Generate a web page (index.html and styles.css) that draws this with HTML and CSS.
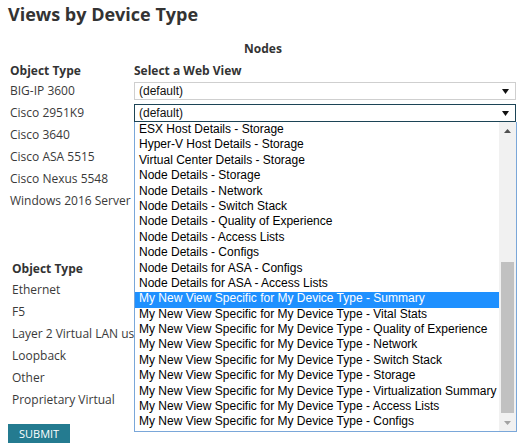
FILE: index.html
```html
<!DOCTYPE html>
<html>
<head>
<meta charset="utf-8">
<link rel="stylesheet" href="styles.css">
</head>
<body>
<h1 class="title">Views by Device Type</h1>

<section class="nodes">
  <div class="caption">Nodes</div>
  <div class="grid">
    <div class="hdr">Object Type</div>
    <div class="hdr">Select a Web View</div>

    <div class="lbl">BIG-IP 3600</div>
    <div class="cell"><div class="select"><span>(default)</span><svg class="arrow" width="7" height="5" viewBox="0 0 7 5"><polygon points="0,0 7,0 3.5,5" fill="#111"/></svg></div></div>

    <div class="lbl">Cisco 2951K9</div>
    <div class="cell">
      <div class="select open"><span>(default)</span><svg class="arrow" width="7" height="5" viewBox="0 0 7 5"><polygon points="0,0 7,0 3.5,5" fill="#111"/></svg></div>
      <div class="dropdown">
        <ul class="options">
          <li>ESX Host Details - Storage</li>
          <li>Hyper-V Host Details - Storage</li>
          <li>Virtual Center Details - Storage</li>
          <li>Node Details - Storage</li>
          <li>Node Details - Network</li>
          <li>Node Details - Switch Stack</li>
          <li>Node Details - Quality of Experience</li>
          <li>Node Details - Access Lists</li>
          <li>Node Details - Configs</li>
          <li>Node Details for ASA - Configs</li>
          <li>Node Details for ASA - Access Lists</li>
          <li class="selected">My New View Specific for My Device Type - Summary</li>
          <li>My New View Specific for My Device Type - Vital Stats</li>
          <li>My New View Specific for My Device Type - Quality of Experience</li>
          <li>My New View Specific for My Device Type - Network</li>
          <li>My New View Specific for My Device Type - Switch Stack</li>
          <li>My New View Specific for My Device Type - Storage</li>
          <li>My New View Specific for My Device Type - Virtualization Summary</li>
          <li>My New View Specific for My Device Type - Access Lists</li>
          <li>My New View Specific for My Device Type - Configs</li>
        </ul>
        <div class="scrollbar">
          <div class="sb-btn"><svg width="7" height="4" viewBox="0 0 7 4"><polygon points="0,4 7,4 3.5,0" fill="#505050"/></svg></div>
          <div class="sb-track"><div class="sb-thumb"></div></div>
          <div class="sb-btn"><svg width="7" height="4" viewBox="0 0 7 4"><polygon points="0,0 7,0 3.5,4" fill="#a3a3a3"/></svg></div>
        </div>
      </div>
    </div>

    <div class="lbl">Cisco 3640</div>
    <div class="cell"><div class="select"></div></div>

    <div class="lbl">Cisco ASA 5515</div>
    <div class="cell"><div class="select"></div></div>

    <div class="lbl">Cisco Nexus 5548</div>
    <div class="cell"><div class="select"></div></div>

    <div class="lbl">Windows 2016 Server</div>
    <div class="cell"><div class="select"></div></div>
  </div>
</section>

<section class="interfaces">
  <div class="grid2">
    <div class="hdr">Object Type</div>
    <div class="lbl">Ethernet</div>
    <div class="lbl">F5</div>
    <div class="lbl clip">Layer 2 Virtual LAN us</div>
    <div class="lbl">Loopback</div>
    <div class="lbl">Other</div>
    <div class="lbl">Proprietary Virtual</div>
  </div>
</section>

<button class="submit">SUBMIT</button>
</body>
</html>
```

FILE: styles.css
```css
html, body {
  margin: 0;
  padding: 0;
  background: #ffffff;
}

body {
  padding: 0 8px;
  font-family: "Open Sans", "Liberation Sans", sans-serif;
  font-size: 12px;
  color: #3a3a3a;
}

.title {
  margin: 2px 0 12px;
  font-size: 18px;
  line-height: 24px;
  font-weight: 700;
  color: #333333;
}

.nodes {
  width: 506px;
  margin-left: 2px;
}

.caption {
  text-align: center;
  font-weight: 700;
  line-height: 20px;
  padding-top: 1px;
  margin-bottom: 1px;
  color: #333333;
}

.grid {
  display: grid;
  grid-template-columns: 124px 382px;
  grid-template-rows: 20px repeat(6, 22px);
}

.hdr {
  font-weight: 700;
  line-height: 20px;
  padding-top: 1px;
  color: #333333;
  white-space: nowrap;
}

.lbl {
  line-height: 20px;
  padding-top: 1px;
  white-space: nowrap;
}

.clip {
  width: 122px;
  overflow: hidden;
}

.cell {
  position: relative;
  padding-top: 2px;
}

.select {
  box-sizing: border-box;
  height: 18px;
  border: 1px solid #cfcfcf;
  display: flex;
  align-items: center;
  justify-content: space-between;
  padding: 0 6px 0 4px;
  font-family: "Liberation Sans", Arial, sans-serif;
  font-size: 12px;
  line-height: 16px;
  color: #111111;
  background: #ffffff;
}

.select.open {
  border-color: #1c4456;
}

.dropdown {
  position: absolute;
  top: 20px;
  left: 0;
  width: 383px;
  height: 310px;
  box-sizing: border-box;
  border: 1px solid #7aa7d9;
  border-top: none;
  background: #ffffff;
  display: flex;
  z-index: 5;
}

.options {
  list-style: none;
  margin: 0;
  padding: 1px 0 0;
  flex: 1;
  overflow: hidden;
  font-family: "Liberation Sans", Arial, sans-serif;
  font-size: 12px;
  color: #000000;
}

.options li {
  height: 15.4px;
  line-height: 13.4px;
  padding-left: 4px;
  white-space: nowrap;
}

.options li.selected {
  background: #1e90ff;
  color: #ffffff;
}

.scrollbar {
  width: 17px;
  background: #f1f1f1;
  display: flex;
  flex-direction: column;
}

.sb-btn {
  height: 17px;
  display: flex;
  align-items: center;
  justify-content: center;
}

.sb-track {
  flex: 1;
  display: flex;
  flex-direction: column;
  justify-content: flex-end;
  padding: 0 2px 1px;
}

.sb-thumb {
  height: 151px;
  background: #c1c1c1;
}

.interfaces {
  margin-top: 46px;
  margin-left: 4px;
}

.grid2 {
  display: grid;
  grid-template-columns: 1fr;
  grid-template-rows: 21px repeat(6, 22px);
}

.submit {
  margin-top: 13px;
  display: block;
  height: 22px;
  padding: 0 11px 2px;
  border: none;
  background: #247b90;
  color: #ffffff;
  font-family: "Open Sans", "Liberation Sans", sans-serif;
  font-size: 11px;
  line-height: 20px;
  cursor: pointer;
}
```
